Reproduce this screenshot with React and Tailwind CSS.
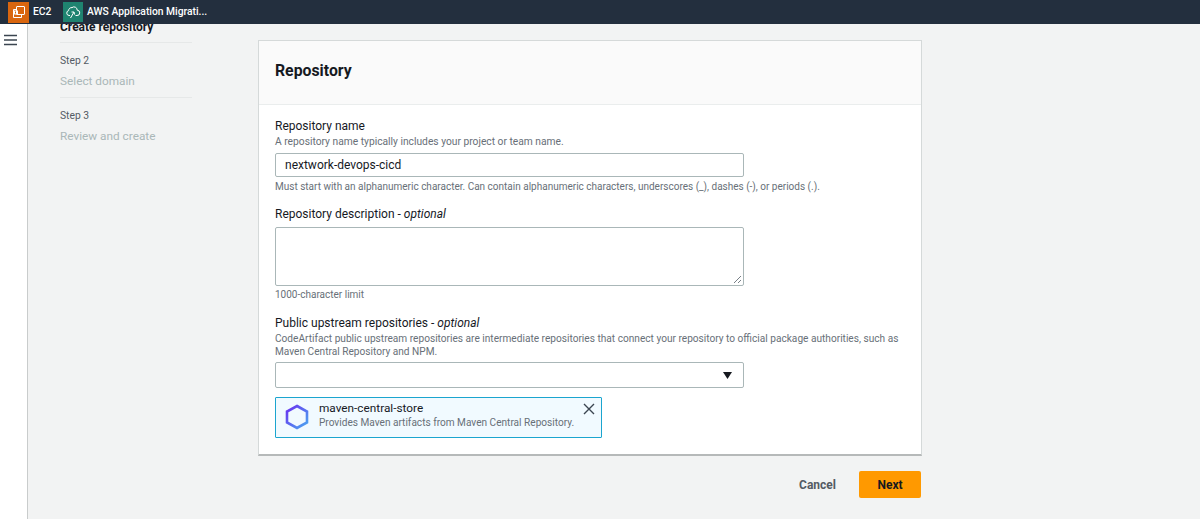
import React from 'react';

const font = { fontFamily: 'Roboto, "Noto Sans", sans-serif' };

const MigrationIcon = () => (
    <svg width="16" height="16" viewBox="0 0 16 16" fill="none" stroke="#fff" strokeWidth="1">
        <path d="M5 11.5H4a2.5 2.5 0 0 1-.4-4.9A3 3 0 0 1 7 3.6a3.2 3.2 0 0 1 5.2 2.6A2.6 2.6 0 0 1 12 11.5h-1.5" />
        <path d="M5.5 14l3.5-6M9 8H6.5M9 8l.6 2.6" />
    </svg>
);

const Ec2Icon = () => (
    <svg width="16" height="16" viewBox="0 0 16 16" fill="none" stroke="#fff" strokeWidth="1">
        <rect x="5.5" y="2.5" width="8" height="8" rx="0.5" />
        <path d="M5.5 5.5H2.5V13.5H10.5V10.5" />
        <rect x="3.5" y="7" width="3" height="3" />
    </svg>
);

const Hexagon = () => (
    <svg width="24" height="26" viewBox="0 0 24 26" fill="none">
        <defs>
            <linearGradient id="hexGrad" x1="0" y1="0" x2="1" y2="1">
                <stop offset="0" stopColor="#6a2ff0" />
                <stop offset="1" stopColor="#4aa8f0" />
            </linearGradient>
        </defs>
        <path d="M12 2L22 7.5V18.5L12 24L2 18.5V7.5Z" stroke="url(#hexGrad)" strokeWidth="2.6" />
    </svg>
);

const SideStep = ({ step, label, border }) => (
    <div className={border ? 'border-b border-[#e6e8e8] h-[55px] pt-[9px]' : 'pt-[9px]'}>
        <div className="text-[10.3px] leading-[18px] text-[#545b64]">{step}</div>
        <div className="text-[11.8px] leading-[18px] mt-[2px] text-[#aab7b8]">{label}</div>
    </div>
);

const App = () => {
    return (
        <div className="w-[1200px] h-[519px] flex flex-col overflow-hidden bg-[#f2f3f3]" style={font}>
            {/* top bar */}
            <div className="h-6 shrink-0 bg-[#232f3e] flex items-center text-white text-[10.3px] font-medium">
                <div className="ml-2 w-[21px] h-[21px] bg-[#d9660f] flex items-center justify-center">
                    <Ec2Icon />
                </div>
                <span className="ml-[4px] w-[17px]">EC2</span>
                <div className="ml-[13px] w-[20px] h-[20px] bg-[#1f8370] flex items-center justify-center">
                    <MigrationIcon />
                </div>
                <span className="ml-[4px]">AWS Application Migrati...</span>
            </div>

            <div className="flex flex-1 overflow-hidden">
                {/* rail */}
                <div className="w-[28px] shrink-0 bg-white border-r border-[#c9cccc] pt-[10px] pl-[4px]">
                    <svg width="13" height="12" viewBox="0 0 13 12" stroke="#3b4550" strokeWidth="1.4">
                        <path d="M0 1.5H13M0 6H13M0 10.5H13" />
                    </svg>
                </div>

                {/* steps */}
                <div className="w-[132px] shrink-0 ml-8 -mt-[5px]">
                    <div className="h-[24px] border-b border-[#e6e8e8] text-[12px] font-bold text-[#16191f] leading-[16px]">
                        Create repository
                    </div>
                    <SideStep step="Step 2" label="Select domain" border />
                    <SideStep step="Step 3" label="Review and create" />
                </div>

                {/* form */}
                <div className="ml-[66px] w-[664px] shrink-0 pt-[16px]">
                    <div className="h-[416px] bg-white border border-[#d5d9d9] border-b-2 border-b-[#b6b9b9]">
                        <div className="h-[64px] bg-[#fafafa] border-b border-[#eaeded] flex items-center pl-4 pb-[3px] text-[15.8px] font-bold text-[#16191f]">
                            Repository
                        </div>
                        <div className="px-4 pt-[13px]">
                            <div className="text-[12px] leading-[16px] text-[#16191f]">Repository name</div>
                            <div className="mt-[1px] text-[10.25px] leading-[14px] text-[#687078]">A repository name typically includes your project or team name.</div>
                            <div className="mt-[4px] w-[469px] h-6 border border-[#aab7b8] rounded-[2px] pl-[9px] flex items-center text-[12px] text-[#16191f]">
                                nextwork-devops-cicd
                            </div>
                            <div className="mt-[3px] text-[10px] leading-[14px] text-[#687078]">
                                Must start with an alphanumeric character. Can contain alphanumeric characters, underscores (_), dashes (-), or periods (.).
                            </div>

                            <div className="mt-[12px] text-[12px] leading-[16px] text-[#16191f]">
                                Repository description - <i>optional</i>
                            </div>
                            <div className="mt-[5px] relative w-[469px] h-[59px] border border-[#aab7b8] rounded-[2px]">
                                <svg className="absolute right-[1px] bottom-[1px]" width="9" height="9" viewBox="0 0 9 9" stroke="#687078" strokeWidth="0.9">
                                    <path d="M1 8L8 1M5 8L8 5" />
                                </svg>
                            </div>
                            <div className="mt-[2px] text-[10px] leading-[14px] text-[#687078]">1000-character limit</div>

                            <div className="mt-[13px] text-[12px] leading-[16px] text-[#16191f]">
                                Public upstream repositories - <i>optional</i>
                            </div>
                            <div className="mt-[1px] text-[10.15px] leading-[13px] text-[#687078]">
                                CodeArtifact public upstream repositories are intermediate repositories that connect your repository to official package authorities, such as<br />
                                Maven Central Repository and NPM.
                            </div>
                            <div className="mt-[4px] w-[469px] h-[26px] border border-[#aab7b8] rounded-[2px] flex items-center justify-end pr-[11px]">
                                <svg width="9" height="7" viewBox="0 0 9 7" fill="#16191f"><path d="M0 0H9L4.5 7Z" /></svg>
                            </div>

                            <div className="mt-[9px] w-[327px] h-[41px] bg-[#f1faff] border border-[#1ba5cf] rounded-[1px] flex items-start">
                                <div className="ml-[9px] mt-[6px] shrink-0"><Hexagon /></div>
                                <div className="ml-[10px] mt-[3px] flex-1">
                                    <div className="text-[11.8px] leading-[15px] text-[#16191f]">maven-central-store</div>
                                    <div className="text-[10.1px] leading-[14px] text-[#687078]">Provides Maven artifacts from Maven Central Repository.</div>
                                </div>
                                <svg className="mt-[5px] mr-[6px] shrink-0" width="12" height="12" viewBox="0 0 12 12" stroke="#3b4550" strokeWidth="1.4">
                                    <path d="M1 1L11 11M11 1L1 11" />
                                </svg>
                            </div>
                        </div>
                    </div>

                    <div className="mt-[15px] mr-[1px] flex items-center justify-end">
                        <span className="text-[12px] font-bold text-[#545b64]">Cancel</span>
                        <div className="ml-[23px] w-[62px] h-[27px] bg-[#ff9900] rounded-[2px] flex items-center justify-center text-[12px] font-bold text-[#16191f]">
                            Next
                        </div>
                    </div>
                </div>
            </div>
        </div>
    );
};

export default App;
